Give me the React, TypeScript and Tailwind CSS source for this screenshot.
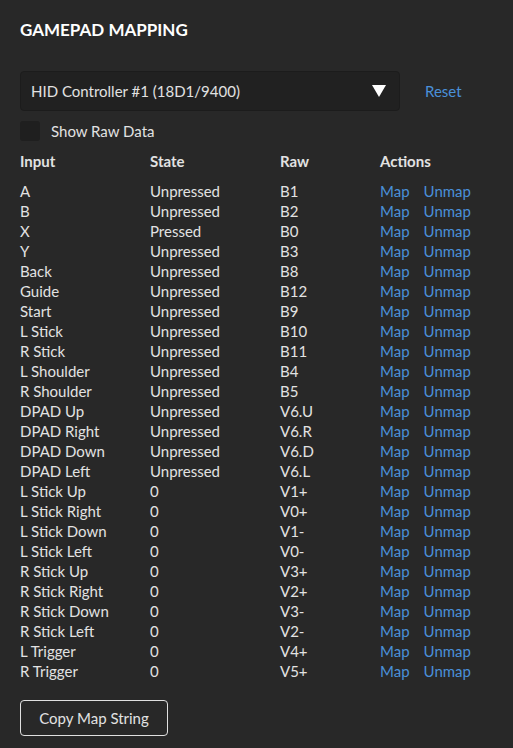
const rows: [string, string, string][] = [
  ['A', 'Unpressed', 'B1'],
  ['B', 'Unpressed', 'B2'],
  ['X', 'Pressed', 'B0'],
  ['Y', 'Unpressed', 'B3'],
  ['Back', 'Unpressed', 'B8'],
  ['Guide', 'Unpressed', 'B12'],
  ['Start', 'Unpressed', 'B9'],
  ['L Stick', 'Unpressed', 'B10'],
  ['R Stick', 'Unpressed', 'B11'],
  ['L Shoulder', 'Unpressed', 'B4'],
  ['R Shoulder', 'Unpressed', 'B5'],
  ['DPAD Up', 'Unpressed', 'V6.U'],
  ['DPAD Right', 'Unpressed', 'V6.R'],
  ['DPAD Down', 'Unpressed', 'V6.D'],
  ['DPAD Left', 'Unpressed', 'V6.L'],
  ['L Stick Up', '0', 'V1+'],
  ['L Stick Right', '0', 'V0+'],
  ['L Stick Down', '0', 'V1-'],
  ['L Stick Left', '0', 'V0-'],
  ['R Stick Up', '0', 'V3+'],
  ['R Stick Right', '0', 'V2+'],
  ['R Stick Down', '0', 'V3-'],
  ['R Stick Left', '0', 'V2-'],
  ['L Trigger', '0', 'V4+'],
  ['R Trigger', '0', 'V5+'],
]

export default function App() {
  return (
    <div
      className="min-h-[748px] w-[513px] bg-[#282828] px-5 pt-[18px] text-[15px] text-[#e2e2e2]"
      style={{ fontFamily: 'Lato, "Noto Sans", sans-serif' }}
    >
      <h1 className="text-[17px] font-bold leading-6 text-white">GAMEPAD MAPPING</h1>

      {/* Controller select */}
      <div className="mt-[29px] flex items-center">
        <div className="flex h-[40px] w-[380px] items-center justify-between rounded-[4px] border border-[#1c1c1c] bg-[#212121] pl-[10px] pr-[13px]">
          <span>HID Controller #1 (18D1/9400)</span>
          <svg width="14" height="12" viewBox="0 0 14 12">
            <path d="M0 0 H14 L7 12 Z" fill="#fff" />
          </svg>
        </div>
        <span className="ml-[25px] text-[#4a90d9]">Reset</span>
      </div>

      <label className="mt-[10px] flex h-5 items-center gap-[11px]">
        <span className="h-5 w-5 rounded-[3px] bg-[#1f1f1f]" />
        <span className="pt-px">Show Raw Data</span>
      </label>

      {/* Mapping table */}
      <div className="mt-[10px] grid grid-cols-[130px_130px_100px_1fr] leading-5">
        <div className="h-[30px] font-bold">Input</div>
        <div className="h-[30px] font-bold">State</div>
        <div className="h-[30px] font-bold">Raw</div>
        <div className="h-[30px] font-bold">Actions</div>
        {rows.map(([input, state, raw]) => (
          <Row key={input} input={input} state={state} raw={raw} />
        ))}
      </div>

      <button
        type="button"
        className="mt-[19px] h-[36px] w-[148px] rounded-[4px] border border-[#e0e0e0] text-[15px] text-[#e2e2e2]"
      >
        Copy Map String
      </button>
    </div>
  )
}

function Row({ input, state, raw }: { input: string; state: string; raw: string }) {
  return (
    <>
      <div>{input}</div>
      <div>{state}</div>
      <div>{raw}</div>
      <div className="flex gap-[14px] text-[#4a90d9]">
        <span>Map</span>
        <span>Unmap</span>
      </div>
    </>
  )
}
